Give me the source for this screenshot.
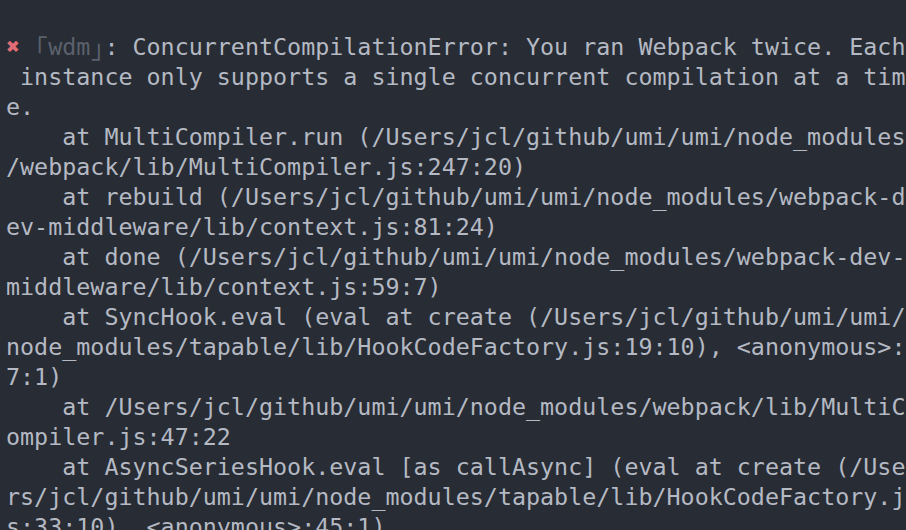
const lines = [
  " instance only supports a single concurrent compilation at a tim",
  "e.",
  "    at MultiCompiler.run (/Users/jcl/github/umi/umi/node_modules",
  "/webpack/lib/MultiCompiler.js:247:20)",
  "    at rebuild (/Users/jcl/github/umi/umi/node_modules/webpack-d",
  "ev-middleware/lib/context.js:81:24)",
  "    at done (/Users/jcl/github/umi/umi/node_modules/webpack-dev-",
  "middleware/lib/context.js:59:7)",
  "    at SyncHook.eval (eval at create (/Users/jcl/github/umi/umi/",
  "node_modules/tapable/lib/HookCodeFactory.js:19:10), <anonymous>:",
  "7:1)",
  "    at /Users/jcl/github/umi/umi/node_modules/webpack/lib/MultiC",
  "ompiler.js:47:22",
  "    at AsyncSeriesHook.eval [as callAsync] (eval at create (/Use",
  "rs/jcl/github/umi/umi/node_modules/tapable/lib/HookCodeFactory.j",
  "s:33:10), <anonymous>:45:1)",
];

// one fixed-width terminal cell, for glyphs the mono font lacks
const Cell = ({ ch, className }: { ch: string; className?: string }) => (
  <span className={"inline-block h-[30px] w-[14.06px] text-center align-top leading-[30px] " + (className ?? "")}>
    {ch}
  </span>
);

const App = () => {
  return (
    <div className="h-[530px] w-[906px] overflow-hidden bg-[#282c34] pl-[6px] pt-[32px] font-['DejaVu_Sans_Mono',monospace] text-[23.35px] leading-[30px] text-[#b4b9c3]">
      <div className="h-[30px] whitespace-pre">
        <Cell ch="✖" className="text-[22px] font-bold text-[#e06c75]" />
        {" "}
        <span className="text-[#5b616c]">
          <Cell ch="｢" className="font-['Noto_Sans_CJK_JP',monospace] text-[25px]" />
          wdm
          <Cell ch="｣" className="font-['Noto_Sans_CJK_JP',monospace] text-[25px]" />
        </span>
        : ConcurrentCompilationError: You ran Webpack twice. Each
      </div>
      {lines.map((line, i) => (
        <div key={i} className="h-[30px] whitespace-pre">
          {line}
        </div>
      ))}
    </div>
  );
};

export default App;
